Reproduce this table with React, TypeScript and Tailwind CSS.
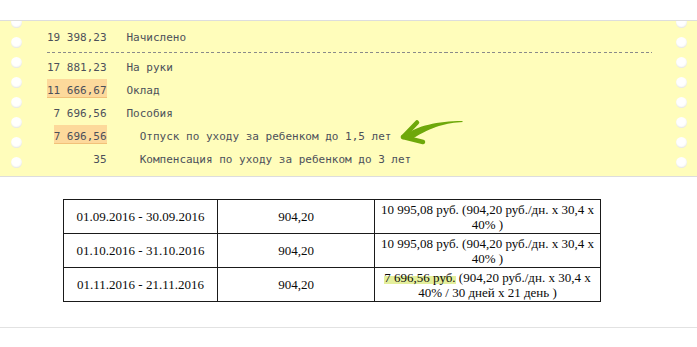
import React from 'react'

const mono = { fontFamily: '"DejaVu Sans Mono", "Liberation Mono", monospace' }

const Holes = () => (
  <div className="w-[32px] shrink-0 flex flex-col items-center gap-[9px] mt-[-4px]">
    {Array.from({ length: 8 }).map((_, i) => (
      <div
        key={i}
        className="w-[11px] h-[11px] rounded-full shrink-0 bg-[radial-gradient(circle_at_45%_40%,#ffffff_45%,#ececec_100%)] shadow-[inset_0_-1px_1px_rgba(0,0,0,0.06)]"
      />
    ))}
  </div>
)

const Hl = ({ children }: { children: React.ReactNode }) => (
  <span className="inline-block leading-[13px] pt-[5px] bg-[#fdd99b] border-b border-[#f2c179]">
    {children}
  </span>
)

const Arrow = () => (
  <svg
    className="absolute left-[351px] top-[-10px]"
    width="70"
    height="32"
    viewBox="0 0 70 32"
    fill="none"
  >
    <path d="M8,20 C18,11 40,6 64,6 L65,7 C48,8 35,11 14,24 Z" fill="#6ea80a" />
    <path d="M5,22 L19,7.5" stroke="#6ea80a" strokeWidth="4.5" strokeLinecap="round" />
    <path d="M5,22 L25,27" stroke="#6ea80a" strokeWidth="4.5" strokeLinecap="round" />
  </svg>
)

type Period = { range: string; rate: string; total: React.ReactNode }

const periods: Period[] = [
  {
    range: '01.09.2016 - 30.09.2016',
    rate: '904,20',
    total: (
      <>
        10 995,08 руб. (904,20 руб./дн. х 30,4 х<br />40% )
      </>
    ),
  },
  {
    range: '01.10.2016 - 31.10.2016',
    rate: '904,20',
    total: (
      <>
        10 995,08 руб. (904,20 руб./дн. х 30,4 х<br />40% )
      </>
    ),
  },
  {
    range: '01.11.2016 - 21.11.2016',
    rate: '904,20',
    total: (
      <>
        <span className="bg-[linear-gradient(transparent_38%,#e4ef9c_38%,#e4ef9c_96%,transparent_96%)]">
          7 696,56 руб.
        </span>{' '}
        (904,20 руб./дн. х 30,4 х<br />40% / 30 дней х 21 день )
      </>
    ),
  },
]

export default function App() {
  return (
    <div className="w-full h-[347px] bg-white overflow-hidden pt-[20px]">
      <div className="flex h-[157px] bg-[#fffdbb] border-y border-[#dddddd] overflow-hidden">
        <Holes />
        <div
          className="flex-1 pl-[15px] pr-[13px] pt-[5px] text-[11px] leading-[23px] text-[#4c505a] whitespace-pre"
          style={mono}
        >
          <div>{'19 398,23   Начислено'}</div>
          <div className="mt-[3px] h-px bg-[repeating-linear-gradient(to_right,#8a8a8a_0_3px,transparent_3px_5.3px)]" />
          <div className="mt-[3px]">{'17 881,23   На руки'}</div>
          <div>
            <Hl>11 666,67</Hl>
            {'   Оклад'}
          </div>
          <div>{' 7 696,56   Пособия'}</div>
          <div className="relative">
            {' '}
            <Hl>7 696,56</Hl>
            {'     Отпуск по уходу за ребенком до 1,5 лет'}
            <Arrow />
          </div>
          <div>{'       35     Компенсация по уходу за ребенком до 3 лет'}</div>
        </div>
        <Holes />
      </div>

      <table
        className="mt-[22px] ml-[63px] border-collapse text-[13px] leading-[15px] text-[#0a0a0a]"
        style={{ fontFamily: '"Liberation Serif", "Times New Roman", serif' }}
      >
        <tbody>
          {periods.map((p) => (
            <tr key={p.range}>
              <td className="w-[154px] h-[34px] border border-[#1a1a1a] text-center align-middle p-0">
                {p.range}
              </td>
              <td className="w-[157px] h-[34px] border border-[#1a1a1a] text-center align-middle p-0">
                {p.rate}
              </td>
              <td className="w-[226px] h-[34px] border border-[#1a1a1a] text-center align-middle p-0">
                {p.total}
              </td>
            </tr>
          ))}
        </tbody>
      </table>

      <div className="mt-[25px] h-px bg-[#e2e2e2]" />
    </div>
  )
}
